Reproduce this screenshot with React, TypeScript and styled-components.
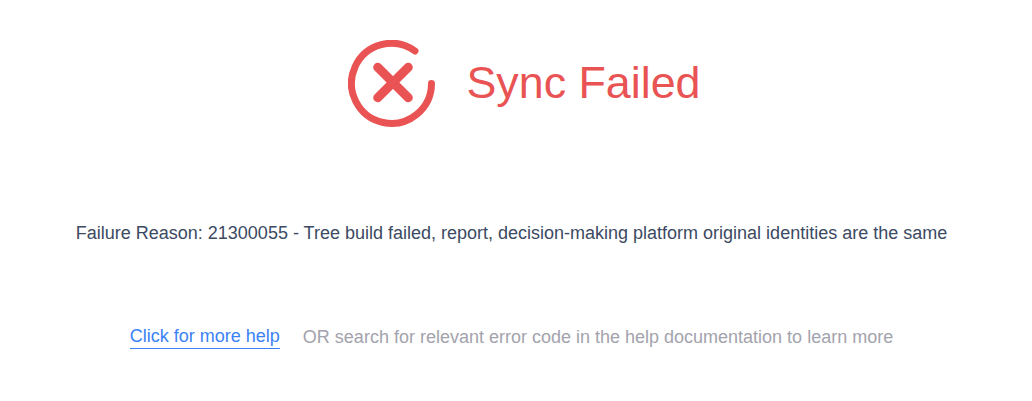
import styled, { createGlobalStyle } from "styled-components";

const GlobalStyle = createGlobalStyle`
  html, body {
    margin: 0;
    padding: 0;
    background: #fff;
  }
`;

const Page = styled.div`
  width: 1032px;
  height: 401px;
  box-sizing: border-box;
  padding-right: 9px;
  overflow: hidden;
  display: flex;
  flex-direction: column;
  align-items: center;
  font-family: "Liberation Sans", Arial, sans-serif;
`;

const Header = styled.div`
  display: flex;
  align-items: center;
  gap: 30px;
  margin-top: 40px;
  margin-left: 26px;
`;

const Title = styled.h1`
  margin: 0 0 4px;
  font-size: 44.8px;
  font-weight: 400;
  line-height: 84px;
  color: #e95353;
`;

const Reason = styled.p`
  margin: 91px 0 0;
  font-size: 18px;
  line-height: 28px;
  color: #3c4a63;
`;

const Help = styled.div`
  display: flex;
  align-items: flex-start;
  gap: 23px;
  margin-top: 77px;
  font-size: 18px;
  line-height: 26px;
`;

const HelpLink = styled.a`
  color: #3b82f6;
  line-height: 24px;
  text-decoration: none;
  border-bottom: 1px solid #3b82f6;
`;

const HelpText = styled.span`
  color: #a3a3ad;
`;

function FailedIcon() {
  return (
    <svg width="88" height="88" viewBox="0 0 88 88" fill="none" stroke="#e95353" strokeWidth="7" strokeLinecap="round">
      <path d="M83.500 43.500A40 40 0 1 1 67 11" />
      <path d="M29.700 27.300L60.300 57.700M60.300 27.300L29.700 57.700" strokeWidth="9" />
    </svg>
  );
}

export default function App() {
  return (
    <>
      <GlobalStyle />
      <Page>
        <Header>
          <FailedIcon />
          <Title>Sync Failed</Title>
        </Header>
        <Reason>Failure Reason: 21300055 - Tree build failed, report, decision-making platform original identities are the same</Reason>
        <Help>
          <HelpLink href="#">Click for more help</HelpLink>
          <HelpText>OR search for relevant error code in the help documentation to learn more</HelpText>
        </Help>
      </Page>
    </>
  );
}
